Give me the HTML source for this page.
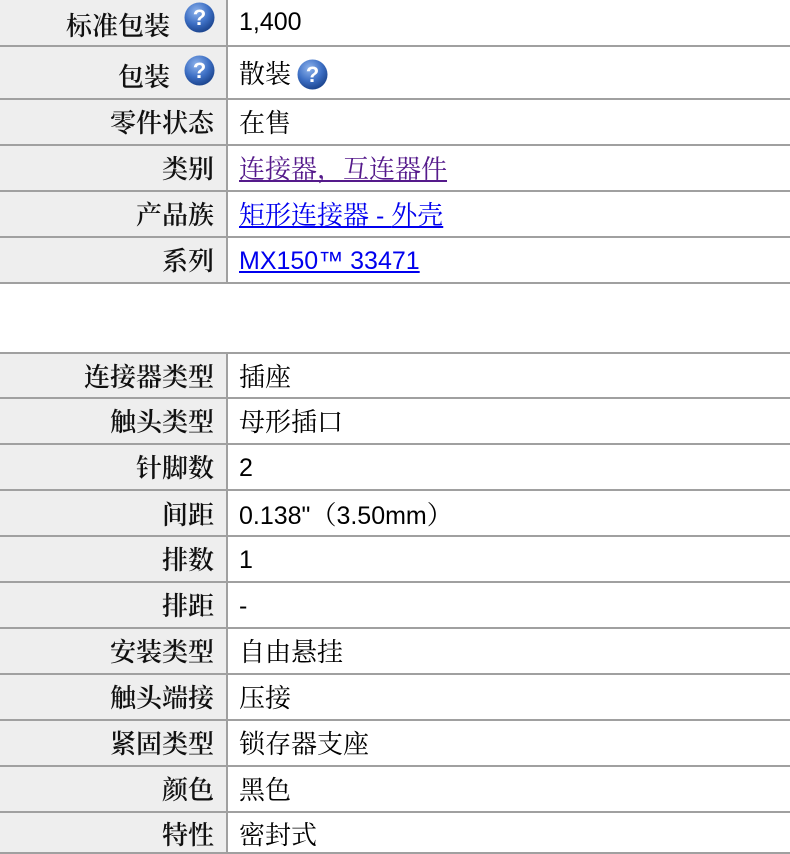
<!DOCTYPE html>
<html><head><meta charset="utf-8"><style>
body{margin:0;width:790px;height:854px;background:#fff;position:relative;overflow:hidden;font-family:"Liberation Sans","Noto Serif CJK SC",serif;}
.l{position:absolute;left:0;width:226px;background:#eeeeee;}
.v{position:absolute;left:226px;width:2px;background:#a0a0a0;}
.h{position:absolute;left:0;width:790px;height:2px;background:#a0a0a0;}
.t{position:absolute;font-size:25px;color:#000;white-space:nowrap;line-height:30px;}
.lab{right:576px;font-family:"Noto Serif CJK SC",serif;font-size:26px;font-weight:600;color:#111;}
.val{left:239px;}
.cj{font-family:"Noto Serif CJK SC",serif;font-size:26px;}
a{text-decoration:underline;}
.q{position:absolute;width:31px;height:31px;}
</style></head><body>
<div class="l" style="top:0;height:283px"></div>
<div class="l" style="top:353px;height:499px"></div>
<div class="v" style="top:0;height:283px"></div>
<div class="v" style="top:353px;height:499px"></div>
<div class="h" style="top:45px"></div>
<div class="h" style="top:98px"></div>
<div class="h" style="top:144px"></div>
<div class="h" style="top:190px"></div>
<div class="h" style="top:236px"></div>
<div class="h" style="top:282px"></div>
<div class="h" style="top:352px"></div>
<div class="h" style="top:397px"></div>
<div class="h" style="top:443px"></div>
<div class="h" style="top:489px"></div>
<div class="h" style="top:535px"></div>
<div class="h" style="top:581px"></div>
<div class="h" style="top:627px"></div>
<div class="h" style="top:673px"></div>
<div class="h" style="top:719px"></div>
<div class="h" style="top:765px"></div>
<div class="h" style="top:811px"></div>
<div class="h" style="top:852px"></div>

<svg width="0" height="0" style="position:absolute"><defs><radialGradient id="g" cx="40%" cy="30%" r="70%"><stop offset="0" stop-color="#8fb4ec"/><stop offset="0.6" stop-color="#3d6fc4"/><stop offset="1" stop-color="#1d4690"/></radialGradient></defs></svg>

<div class="t lab" style="top:10px;right:620px">标准包装</div>
<svg class="q" style="left:184px;top:2px" viewBox="0 0 31 31"><circle cx="15.5" cy="15.5" r="15" fill="url(#g)"/><text x="15.5" y="23" text-anchor="middle" font-family="Liberation Sans" font-weight="bold" font-size="22" fill="#fff">?</text></svg>
<div class="t val" style="top:7px">1,400</div>

<div class="t lab" style="top:61px;right:620px">包装</div>
<svg class="q" style="left:184px;top:55px" viewBox="0 0 31 31"><circle cx="15.5" cy="15.5" r="15" fill="url(#g)"/><text x="15.5" y="23" text-anchor="middle" font-family="Liberation Sans" font-weight="bold" font-size="22" fill="#fff">?</text></svg>
<div class="t val cj" style="top:58px">散装</div>
<svg class="q" style="left:297px;top:59px" viewBox="0 0 31 31"><circle cx="15.5" cy="15.5" r="15" fill="url(#g)"/><text x="15.5" y="23" text-anchor="middle" font-family="Liberation Sans" font-weight="bold" font-size="22" fill="#fff">?</text></svg>

<div class="t lab" style="top:107px">零件状态</div>
<div class="t val cj" style="top:107px">在售</div>
<div class="t lab" style="top:153px">类别</div>
<div class="t val cj" style="top:153px"><a style="color:#551a8b">连接器，互连器件</a></div>
<div class="t lab" style="top:199px">产品族</div>
<div class="t val" style="top:199px"><a style="color:#0000ee"><span class="cj">矩形连接器</span> - <span class="cj">外壳</span></a></div>
<div class="t lab" style="top:245px">系列</div>
<div class="t val" style="top:246px"><a style="color:#0000ee">MX150™ 33471</a></div>

<div class="t lab" style="top:361px">连接器类型</div>
<div class="t val cj" style="top:361px">插座</div>
<div class="t lab" style="top:406px">触头类型</div>
<div class="t val cj" style="top:406px">母形插口</div>
<div class="t lab" style="top:452px">针脚数</div>
<div class="t val" style="top:453px">2</div>
<div class="t lab" style="top:499px">间距</div>
<div class="t val" style="top:499px">0.138"<span class="cj">（</span>3.50mm<span class="cj">）</span></div>
<div class="t lab" style="top:544px">排数</div>
<div class="t val" style="top:545px">1</div>
<div class="t lab" style="top:590px">排距</div>
<div class="t val" style="top:591px">-</div>
<div class="t lab" style="top:636px">安装类型</div>
<div class="t val cj" style="top:636px">自由悬挂</div>
<div class="t lab" style="top:682px">触头端接</div>
<div class="t val cj" style="top:682px">压接</div>
<div class="t lab" style="top:728px">紧固类型</div>
<div class="t val cj" style="top:728px">锁存器支座</div>
<div class="t lab" style="top:774px">颜色</div>
<div class="t val cj" style="top:774px">黑色</div>
<div class="t lab" style="top:819px">特性</div>
<div class="t val cj" style="top:819px">密封式</div>
</body></html>
